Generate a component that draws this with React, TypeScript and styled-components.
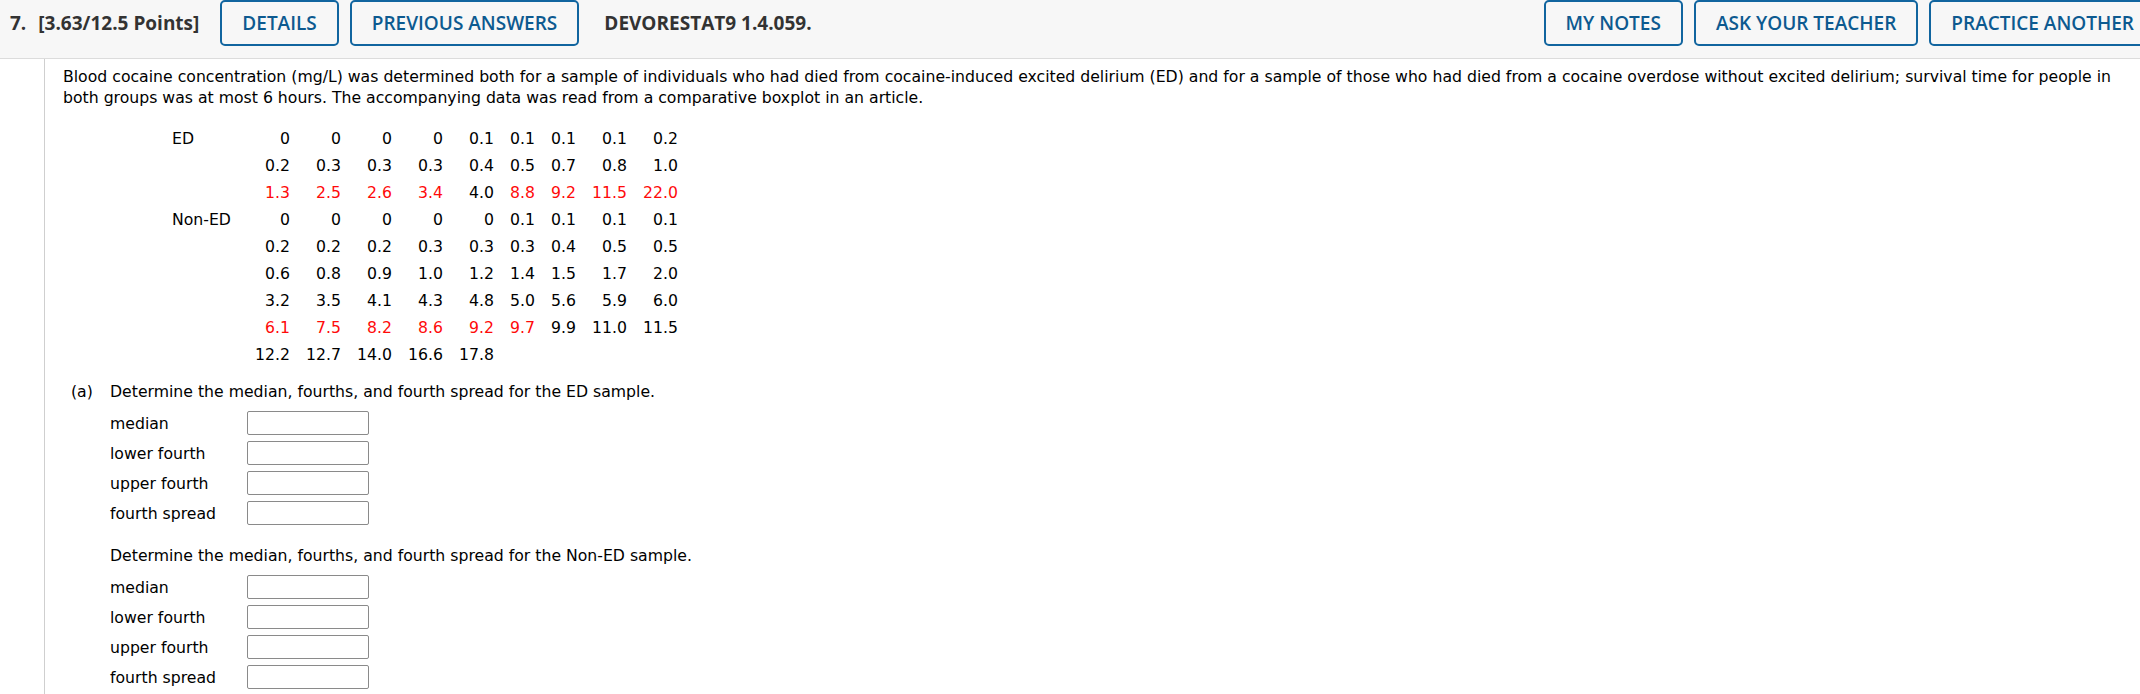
import React from 'react';
import styled, { createGlobalStyle } from 'styled-components';

const GlobalStyle = createGlobalStyle`
  html, body {
    margin: 0;
    padding: 0;
    background: #ffffff;
    overflow: hidden;
  }
  body {
    font-family: "DejaVu Sans", Verdana, sans-serif;
    color: #000;
  }
`;

const Page = styled.div`
  width: 100%;
  min-height: 694px;
`;

const Header = styled.header`
  display: flex;
  align-items: flex-start;
  height: 59px;
  padding: 0 0 12px 10px;
  box-sizing: border-box;
  margin-right: -16px;
  background: #f7f7f7;
  border-bottom: 1px solid #dcdcdc;
  font-family: "Open Sans", "Liberation Sans", sans-serif;
  font-size: 19px;
  color: #333;
  white-space: nowrap;
`;

const HeaderText = styled.span<{ $weight: number; $gap?: number; $lead?: number }>`
  align-self: center;
  font-weight: ${(p) => p.$weight};
  margin-left: ${(p) => p.$lead ?? 0}px;
  margin-right: ${(p) => p.$gap ?? 0}px;
`;

const ButtonGroup = styled.div<{ $push?: boolean }>`
  display: flex;
  gap: 11px;
  margin-left: ${(p) => (p.$push ? 'auto' : '0')};
`;

const HeaderButton = styled.button`
  height: 46px;
  padding: 0 20px;
  border: 2px solid #11659f;
  border-radius: 5px;
  background: transparent;
  font-family: "Open Sans", "Liberation Sans", sans-serif;
  font-size: 19px;
  font-weight: 600;
  color: #0d5a90;
  cursor: pointer;
`;

const Body = styled.main`
  margin-left: 44px;
  border-left: 1px solid #cfcfcf;
  padding: 7px 0 0 18px;
  min-height: 640px;
  font-size: 15.7px;
  line-height: 21px;
`;

const Intro = styled.p`
  margin: 0 0 17px 0;
  white-space: nowrap;
`;

const DataTable = styled.table`
  border-collapse: collapse;
  margin: 0 0 13px 100px;
  table-layout: fixed;
`;

const Col = styled.col<{ $w: number }>`
  width: ${(p) => p.$w}px;
`;

const LabelCell = styled.td`
  padding: 3px 0 3px 9px;
  text-align: left;
  white-space: nowrap;
`;

const NumCell = styled.td<{ $red?: boolean }>`
  padding: 3px 9px 3px 2px;
  text-align: right;
  white-space: nowrap;
  color: ${(p) => (p.$red ? '#ff0a0a' : '#000')};
`;

const Part = styled.section`
  display: flex;
  margin: 0 0 17px 8px;
`;

const PartLabel = styled.div`
  width: 39px;
  flex: none;
`;

const PartBody = styled.div`
  display: flex;
  flex-direction: column;
`;

const Prompt = styled.div`
  margin-bottom: 6px;
`;

const AnswerRow = styled.label`
  display: flex;
  align-items: center;
  height: 30px;
`;

const AnswerLabel = styled.span`
  width: 137px;
`;

const AnswerInput = styled.input`
  width: 122px;
  height: 24px;
  box-sizing: border-box;
  border: 1px solid #8a8a8a;
  border-radius: 2px;
  background: #fff;
  padding: 0 4px;
  font-family: inherit;
  font-size: 14px;
`;

type Cell = { v: string; red?: boolean };

const c = (v: string, red = false): Cell => ({ v, red });

const edRows: Cell[][] = [
  ['0', '0', '0', '0', '0.1', '0.1', '0.1', '0.1', '0.2'].map((v) => c(v)),
  ['0.2', '0.3', '0.3', '0.3', '0.4', '0.5', '0.7', '0.8', '1.0'].map((v) => c(v)),
  [c('1.3', true), c('2.5', true), c('2.6', true), c('3.4', true), c('4.0'), c('8.8', true), c('9.2', true), c('11.5', true), c('22.0', true)],
];

const nonEdRows: Cell[][] = [
  ['0', '0', '0', '0', '0', '0.1', '0.1', '0.1', '0.1'].map((v) => c(v)),
  ['0.2', '0.2', '0.2', '0.3', '0.3', '0.3', '0.4', '0.5', '0.5'].map((v) => c(v)),
  ['0.6', '0.8', '0.9', '1.0', '1.2', '1.4', '1.5', '1.7', '2.0'].map((v) => c(v)),
  ['3.2', '3.5', '4.1', '4.3', '4.8', '5.0', '5.6', '5.9', '6.0'].map((v) => c(v)),
  [c('6.1', true), c('7.5', true), c('8.2', true), c('8.6', true), c('9.2', true), c('9.7', true), c('9.9'), c('11.0'), c('11.5')],
  ['12.2', '12.7', '14.0', '16.6', '17.8'].map((v) => c(v)),
];

const colWidths = [84, 52, 51, 51, 51, 51, 41, 41, 51, 51];

const fields = ['median', 'lower fourth', 'upper fourth', 'fourth spread'];

const renderGroup = (label: string, rows: Cell[][]) =>
  rows.map((row, i) => (
    <tr key={label + i}>
      <LabelCell>{i === 0 ? label : ''}</LabelCell>
      {row.map((cell, j) => (
        <NumCell key={j} $red={cell.red}>
          {cell.v}
        </NumCell>
      ))}
    </tr>
  ));

const Answers: React.FC<{ prompt: string }> = ({ prompt }) => (
  <PartBody>
    <Prompt>{prompt}</Prompt>
    {fields.map((f) => (
      <AnswerRow key={f}>
        <AnswerLabel>{f}</AnswerLabel>
        <AnswerInput type="text" />
      </AnswerRow>
    ))}
  </PartBody>
);

const App: React.FC = () => (
  <Page>
    <GlobalStyle />
    <Header>
      <HeaderText $weight={700} $gap={12}>7.</HeaderText>
      <HeaderText $weight={700} $gap={21}>[3.63/12.5 Points]</HeaderText>
      <ButtonGroup>
        <HeaderButton>DETAILS</HeaderButton>
        <HeaderButton>PREVIOUS ANSWERS</HeaderButton>
      </ButtonGroup>
      <HeaderText $weight={700} $lead={25}>
        DEVORESTAT9 1.4.059.
      </HeaderText>
      <ButtonGroup $push>
        <HeaderButton>MY NOTES</HeaderButton>
        <HeaderButton>ASK YOUR TEACHER</HeaderButton>
        <HeaderButton>PRACTICE ANOTHER</HeaderButton>
      </ButtonGroup>
    </Header>
    <Body>
      <Intro>
        Blood cocaine concentration (mg/L) was determined both for a sample of individuals who had died from
        cocaine-induced excited delirium (ED) and for a sample of those who had died from a cocaine overdose
        without excited delirium; survival time for people in
        <br />
        both groups was at most 6 hours. The accompanying data was read from a comparative boxplot in an
        article.
      </Intro>
      <DataTable>
        <colgroup>
          {colWidths.map((w, i) => (
            <Col key={i} $w={w} />
          ))}
        </colgroup>
        <tbody>
          {renderGroup('ED', edRows)}
          {renderGroup('Non-ED', nonEdRows)}
        </tbody>
      </DataTable>
      <Part>
        <PartLabel>(a)</PartLabel>
        <Answers prompt="Determine the median, fourths, and fourth spread for the ED sample." />
      </Part>
      <Part>
        <PartLabel />
        <Answers prompt="Determine the median, fourths, and fourth spread for the Non-ED sample." />
      </Part>
    </Body>
  </Page>
);

export default App;
